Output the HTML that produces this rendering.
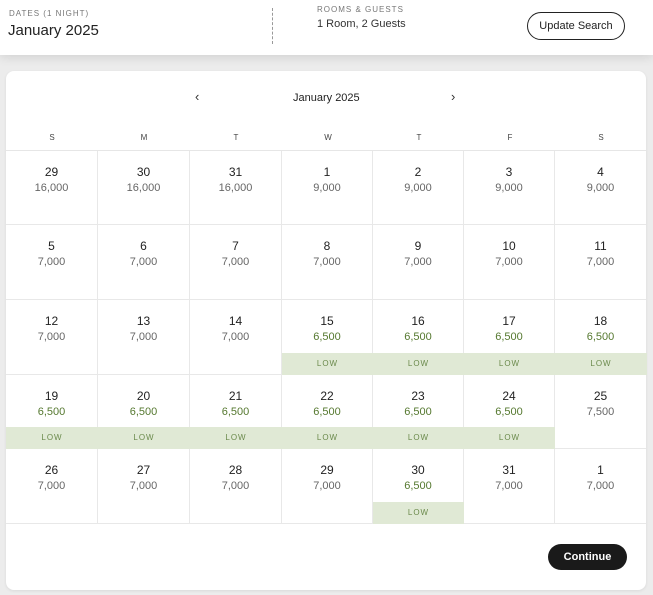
<!DOCTYPE html>
<html><head><meta charset="utf-8"><style>
*{box-sizing:border-box;margin:0;padding:0}
body{width:653px;height:595px;background:#ececec;font-family:"Liberation Sans",Arial,sans-serif;position:relative;overflow:hidden}
.hdr{position:absolute;left:0;top:0;width:653px;height:55px;background:#fff;box-shadow:0 2px 10px rgba(0,0,0,.12)}
.lbl{position:absolute;font-size:8px;letter-spacing:1px;color:#777}
.card{position:absolute;left:6px;top:71px;width:640px;height:519px;background:#fff;border-radius:8px;box-shadow:0 1px 3px rgba(0,0,0,.08)}
.grid{position:absolute;left:0;top:79px;display:grid;grid-template-columns:92px 92px 92px 91px 91px 91px 91px;grid-template-rows:74px 75px 75px 74px 75px;border-top:1px solid #e6e6e6}
.c{position:relative;border-right:1px solid #e8e8e8;border-bottom:1px solid #e8e8e8;text-align:center}
.c:nth-child(7n){border-right:none}
.d{position:absolute;top:14px;left:0;right:0;font-size:12px;color:#222}
.p{position:absolute;top:31px;left:0;right:0;font-size:11px;color:#666}
.g .p{color:#55782f}
.low{position:absolute;left:0;right:-1px;bottom:-1px;height:22px;background:#e0e9d5;font-size:8px;letter-spacing:1px;color:#6b8a4c;line-height:22px}
.dow{position:absolute;top:62px;font-size:8px;color:#444;width:92px;text-align:center}
</style></head><body>
<div class="hdr">
<div class="lbl" style="left:9px;top:9px">DATES (1 NIGHT)</div>
<div style="position:absolute;left:8px;top:22px;font-size:15px;color:#222">January 2025</div>
<div style="position:absolute;left:272px;top:8px;height:36px;border-left:1px dashed #999"></div>
<div class="lbl" style="left:317px;top:5px">ROOMS &amp; GUESTS</div>
<div style="position:absolute;left:317px;top:18px;font-size:11px;color:#333">1 Room, 2 Guests</div>
<div style="position:absolute;left:527px;top:12px;width:98px;height:28px;border:1px solid #222;border-radius:14px;font-size:11px;text-align:center;line-height:26px;color:#222">Update Search</div>
</div>
<div class="card">
<div style="position:absolute;left:189px;top:18px;font-size:13px;color:#333">‹</div>
<div style="position:absolute;left:287px;top:21px;font-size:11px;color:#222">January 2025</div>
<div style="position:absolute;left:445px;top:18px;font-size:13px;color:#333">›</div>
<div class="dow" style="left:0">S</div><div class="dow" style="left:92px">M</div><div class="dow" style="left:184px">T</div><div class="dow" style="left:276px">W</div><div class="dow" style="left:367px">T</div><div class="dow" style="left:458px">F</div><div class="dow" style="left:549px">S</div>
<div class="grid">
<div class="c"><div class="d">29</div><div class="p">16,000</div></div>
<div class="c"><div class="d">30</div><div class="p">16,000</div></div>
<div class="c"><div class="d">31</div><div class="p">16,000</div></div>
<div class="c"><div class="d">1</div><div class="p">9,000</div></div>
<div class="c"><div class="d">2</div><div class="p">9,000</div></div>
<div class="c"><div class="d">3</div><div class="p">9,000</div></div>
<div class="c"><div class="d">4</div><div class="p">9,000</div></div>
<div class="c"><div class="d">5</div><div class="p">7,000</div></div>
<div class="c"><div class="d">6</div><div class="p">7,000</div></div>
<div class="c"><div class="d">7</div><div class="p">7,000</div></div>
<div class="c"><div class="d">8</div><div class="p">7,000</div></div>
<div class="c"><div class="d">9</div><div class="p">7,000</div></div>
<div class="c"><div class="d">10</div><div class="p">7,000</div></div>
<div class="c"><div class="d">11</div><div class="p">7,000</div></div>
<div class="c"><div class="d">12</div><div class="p">7,000</div></div>
<div class="c"><div class="d">13</div><div class="p">7,000</div></div>
<div class="c"><div class="d">14</div><div class="p">7,000</div></div>
<div class="c g"><div class="d">15</div><div class="p">6,500</div><div class="low">LOW</div></div>
<div class="c g"><div class="d">16</div><div class="p">6,500</div><div class="low">LOW</div></div>
<div class="c g"><div class="d">17</div><div class="p">6,500</div><div class="low">LOW</div></div>
<div class="c g"><div class="d">18</div><div class="p">6,500</div><div class="low">LOW</div></div>
<div class="c g"><div class="d">19</div><div class="p">6,500</div><div class="low">LOW</div></div>
<div class="c g"><div class="d">20</div><div class="p">6,500</div><div class="low">LOW</div></div>
<div class="c g"><div class="d">21</div><div class="p">6,500</div><div class="low">LOW</div></div>
<div class="c g"><div class="d">22</div><div class="p">6,500</div><div class="low">LOW</div></div>
<div class="c g"><div class="d">23</div><div class="p">6,500</div><div class="low">LOW</div></div>
<div class="c g"><div class="d">24</div><div class="p">6,500</div><div class="low">LOW</div></div>
<div class="c"><div class="d">25</div><div class="p">7,500</div></div>
<div class="c"><div class="d">26</div><div class="p">7,000</div></div>
<div class="c"><div class="d">27</div><div class="p">7,000</div></div>
<div class="c"><div class="d">28</div><div class="p">7,000</div></div>
<div class="c"><div class="d">29</div><div class="p">7,000</div></div>
<div class="c g"><div class="d">30</div><div class="p">6,500</div><div class="low">LOW</div></div>
<div class="c"><div class="d">31</div><div class="p">7,000</div></div>
<div class="c"><div class="d">1</div><div class="p">7,000</div></div>
</div>
<div style="position:absolute;left:542px;top:473px;width:79px;height:26px;background:#1a1a1a;border-radius:13px;color:#fff;font-size:11px;font-weight:bold;text-align:center;line-height:26px">Continue</div>
</div>
</body></html>
